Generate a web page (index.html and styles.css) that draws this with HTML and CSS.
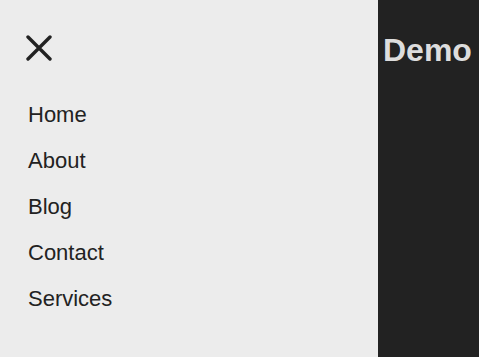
FILE: index.html
```html
<!DOCTYPE html>
<html>
<head>
<meta charset="utf-8">
<link rel="stylesheet" href="styles.css">
</head>
<body>
<div class="layout">
  <nav class="sidenav">
    <a class="close" href="#" aria-label="Close">
      <svg width="26" height="26" viewBox="0 0 26 26"><path d="M2 2 L24 24 M24 2 L2 24" stroke="#222" stroke-width="3.4" stroke-linecap="round" fill="none"/></svg>
    </a>
    <ul class="menu">
      <li><a href="#">Home</a></li>
      <li><a href="#">About</a></li>
      <li><a href="#">Blog</a></li>
      <li><a href="#">Contact</a></li>
      <li><a href="#">Services</a></li>
    </ul>
  </nav>
  <main class="main">
    <h1 class="title">Demo</h1>
  </main>
</div>
</body>
</html>
```
FILE: styles.css
```css
html, body {
  margin: 0;
  padding: 0;
  height: 100%;
}
body {
  background: #222;
  font-family: "Liberation Sans", Arial, sans-serif;
  overflow: hidden;
}
.layout {
  display: flex;
  height: 100%;
}
.sidenav {
  width: 378px;
  flex: none;
  background: #ececec;
  padding: 35px 0 0 26px;
  box-sizing: border-box;
}
.close {
  display: block;
  width: 26px;
  height: 26px;
}
.close svg {
  display: block;
}
.menu {
  list-style: none;
  margin: 0;
  padding: 0;
  margin-top: 41px;
  display: flex;
  flex-direction: column;
  gap: 21px;
}
.menu a {
  display: block;
  color: #222;
  text-decoration: none;
  font-size: 22px;
  line-height: 25px;
  padding-left: 2px;
}
.main {
  flex: 1;
  padding-left: 5px;
}
.title {
  margin: 30px 0 0;
  color: #ddd;
  font-size: 32px;
  font-weight: bold;
  line-height: 40px;
}
```
